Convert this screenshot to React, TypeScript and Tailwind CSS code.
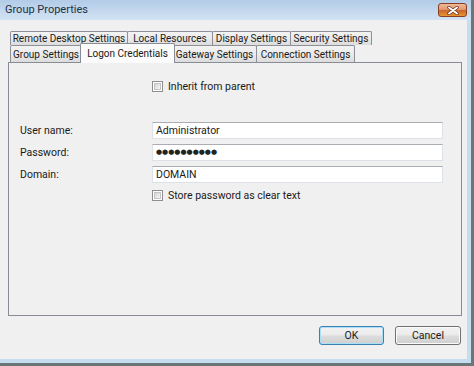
import React from 'react';

const font = { fontFamily: 'Roboto, "Liberation Sans", Arial, sans-serif' };

function Tab({ label, width, selected }: { label: string; width: number; selected?: boolean }) {
  if (selected) {
    return (
      <div
        className="relative z-10 shrink-0 -mt-[2px] -mx-[2px] h-[20px] border border-b-0 border-[#898c95] bg-[#fbfbfb] flex items-start justify-center pt-[3px] whitespace-nowrap text-[10px] leading-[13px] text-[#1a1a1a] rounded-t-[2px]"
        style={{ width: width + 4 }}
      >
        {label}
      </div>
    );
  }
  return (
    <div
      className="h-full shrink-0 border border-b-0 border-[#8d9097] -ml-[1px] first:ml-0 bg-gradient-to-b from-[#f3f3f3] via-[#ebebeb] to-[#dcdcdc] flex items-center justify-center whitespace-nowrap text-[10px] leading-[13px] text-[#1a1a1a] rounded-t-[2px]"
      style={{ width }}
    >
      {label}
    </div>
  );
}

function CheckBox({ label }: { label: string }) {
  return (
    <div className="flex items-center h-[13px] gap-[5px]">
      <div className="w-[11px] h-[11px] border border-[#8e8f8f] bg-white p-[1px]">
        <div className="w-full h-full bg-gradient-to-br from-[#d4d4d4] to-[#f7f7f7] border border-[#c4c4c4]" />
      </div>
      <span className="text-[10.5px] text-[#1a1a1a] whitespace-nowrap">{label}</span>
    </div>
  );
}

function Field({ label, children }: { label: string; children: React.ReactNode }) {
  return (
    <div className="flex items-center h-[17px]">
      <div className="w-[132px] text-[10.5px] text-[#1a1a1a]">{label}</div>
      <div className="w-[291px] h-[17px] border border-[#dde2e8] border-t-[#abadb3] bg-white flex items-center px-[3px] text-[10.5px] text-[#1a1a1a]">
        {children}
      </div>
    </div>
  );
}

function Button({ label, focused }: { label: string; focused?: boolean }) {
  return (
    <div
      className={`h-[19px] rounded-[3px] border ${
        focused ? 'border-[#3c7fb1] shadow-[inset_0_0_0_1px_#a8e0f7]' : 'border-[#707070] shadow-[inset_0_0_0_1px_#fbfbfb]'
      } bg-[linear-gradient(#f2f2f2_0%,#ebebeb_48%,#dddddd_52%,#cfcfcf_100%)] flex items-center justify-center text-[10.5px] text-[#1a1a1a]`}
      style={{ width: focused ? 65 : 66 }}
    >
      {label}
    </div>
  );
}

export default function App() {
  return (
    <div className="w-[474px] h-[366px] bg-[#6a7677] overflow-hidden" style={font}>
      <div className="w-[471px] h-[363px] bg-[#c6dcef] flex flex-col">
        {/* title bar */}
        <div className="h-[20px] shrink-0 bg-gradient-to-b from-[#b2cbe7] to-[#d3e3f4] flex items-center justify-between pl-[5px] pr-[4px]">
          <span className="text-[11px] text-[#1d3148]">Group Properties</span>
          <div className="w-[29px] h-[14px] rounded-[3px] border border-[#8a3f24] bg-[linear-gradient(#efb897_0%,#e19a70_45%,#c9652f_55%,#e8962f_100%)] flex items-center justify-center">
            <svg width="12" height="9" viewBox="0 0 12 9">
              <path d="M2 1.5 L10 7.5 M10 1.5 L2 7.5" stroke="#6b2a16" strokeWidth="3.4" strokeLinecap="round" />
              <path d="M2 1.5 L10 7.5 M10 1.5 L2 7.5" stroke="#ffffff" strokeWidth="2" strokeLinecap="round" />
            </svg>
          </div>
        </div>

        {/* client area */}
        <div className="flex-1 mr-[4px] mb-[4px] bg-[#f0f0f0] pt-[11px] pl-[8px] pr-[5px] flex flex-col">
          <div className="pl-[2px]">
            <div className="flex h-[14px]">
              <Tab label="Remote Desktop Settings" width={118} />
              <Tab label="Local Resources" width={86} />
              <Tab label="Display Settings" width={79} />
              <Tab label="Security Settings" width={82} />
            </div>
            <div className="flex h-[17px] items-start">
              <Tab label="Group Settings" width={72} />
              <Tab label="Logon Credentials" width={91} selected />
              <Tab label="Gateway Settings" width={85} />
              <Tab label="Connection Settings" width={99} />
            </div>
          </div>

          <div className="h-[254px] border border-[#898c95] bg-[#f0f0f0] pl-[11px] pt-[17px] flex flex-col">
            <div className="pl-[132px]">
              <CheckBox label="Inherit from parent" />
            </div>
            <div className="mt-[29px] flex flex-col gap-[5px]">
              <Field label="User name:">Administrator</Field>
              <Field label="Password:">
                <span className="text-[7px] leading-[7px] text-[#222]" style={{ fontFamily: '"DejaVu Sans", sans-serif' }}>
                  ●●●●●●●●●●
                </span>
              </Field>
              <Field label="Domain:">DOMAIN</Field>
            </div>
            <div className="mt-[6px] pl-[132px]">
              <CheckBox label="Store password as clear text" />
            </div>
          </div>

          <div className="mt-[10px] flex justify-end gap-[11px] pr-[1px]">
            <Button label="OK" focused />
            <Button label="Cancel" />
          </div>
        </div>
      </div>
    </div>
  );
}
